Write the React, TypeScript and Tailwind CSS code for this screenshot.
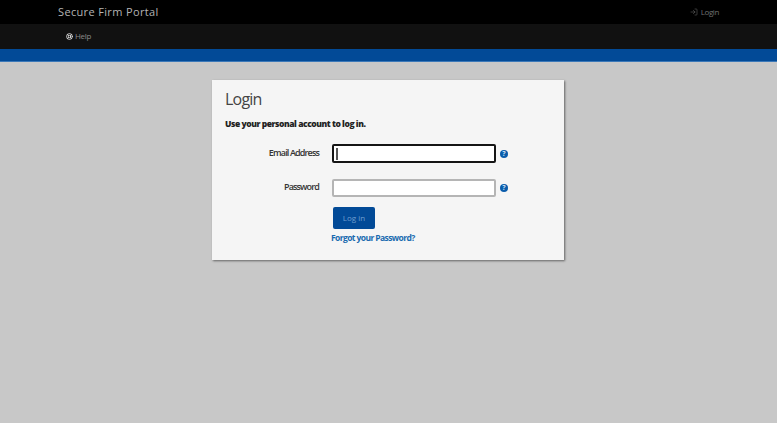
import React from 'react'
import { LifeBuoy, LogIn } from 'lucide-react'

const fieldRow = 'flex items-center'
const labelCls = 'mb-[2px] w-[94px] text-right text-[9px] font-semibold leading-[14px] tracking-[-0.85px] text-[#333]'

const HelpDot = ({ className = '' }: { className?: string }) => (
  <span className={`ml-[4px] flex h-[8px] w-[8px] items-center justify-center rounded-full bg-[#0a5cab] text-[7px] font-bold leading-none text-[#cfe2f5] ${className}`}>
    ?
  </span>
)

export default function App() {
  return (
    <div className="flex min-h-[423px] flex-col bg-[#c8c8c8] font-['Open_Sans',sans-serif]">
      {/* top bar */}
      <div className="flex h-[24px] items-center justify-between bg-black pb-[1px] pl-[58px] pr-[58px]">
        <span className="text-[11px] leading-none tracking-[0.35px] text-[#b4b4b4]">Secure Firm Portal</span>
        <span className="flex items-center gap-[3px] text-[8px] tracking-[-0.4px] text-[#707070]">
          <LogIn size={8} strokeWidth={1.5} />
          Login
        </span>
      </div>
      <div className="flex h-[25px] items-center bg-[#111111] pb-[1px] pl-[66px]">
        <span className="flex items-center gap-[2px] text-[8px] tracking-[-0.3px] text-[#8a8a8a]">
          <LifeBuoy size={7} strokeWidth={3} className="text-[#d8d8d8]" />
          Help
        </span>
      </div>
      <div className="h-[13px] border-b border-[#3b78b8] bg-[#024a97]" />

      {/* login card */}
      <div className="ml-[212px] mt-[18px] h-[180px] w-[352px] bg-[#f5f5f5] pl-[13px] pt-[9px] shadow-[1px_1px_2px_rgba(0,0,0,0.5)]">
        <h1 className="text-[16px] leading-[20px] tracking-[-0.8px] text-[#444]">Login</h1>
        <p className="mt-[8px] text-[8.5px] font-extrabold leading-[14px] tracking-[-0.45px] text-[#222]">Use your personal account to log in.</p>

        <div className={`${fieldRow} mt-[13px]`}>
          <label className={labelCls}>Email Address</label>
          <div className="ml-[13px] flex h-[19px] w-[164px] items-center rounded-[2px] border-2 border-[#151515] bg-white pl-[2px]">
            <span className="h-[12px] w-[1.5px] bg-[#555]" />
          </div>
          <HelpDot />
        </div>

        <div className={`${fieldRow} mt-[16px]`}>
          <label className={labelCls}>Password</label>
          <div className="ml-[13px] h-[18px] w-[164px] rounded-[2px] border-2 border-[#b5b5b5] bg-white" />
          <HelpDot className="mb-[1px]" />
        </div>

        <div className="ml-[108px] mt-[10px] flex h-[22px] w-[42px] items-center justify-center rounded-[2px] bg-[#024a97] text-[8px] text-[#6f9fd0]">
          Log in
        </div>
        <a className="ml-[106px] mt-[2px] block text-[8.5px] font-bold leading-[13px] tracking-[-0.6px] text-[#1a6bb0]">Forgot your Password?</a>
      </div>
    </div>
  )
}
